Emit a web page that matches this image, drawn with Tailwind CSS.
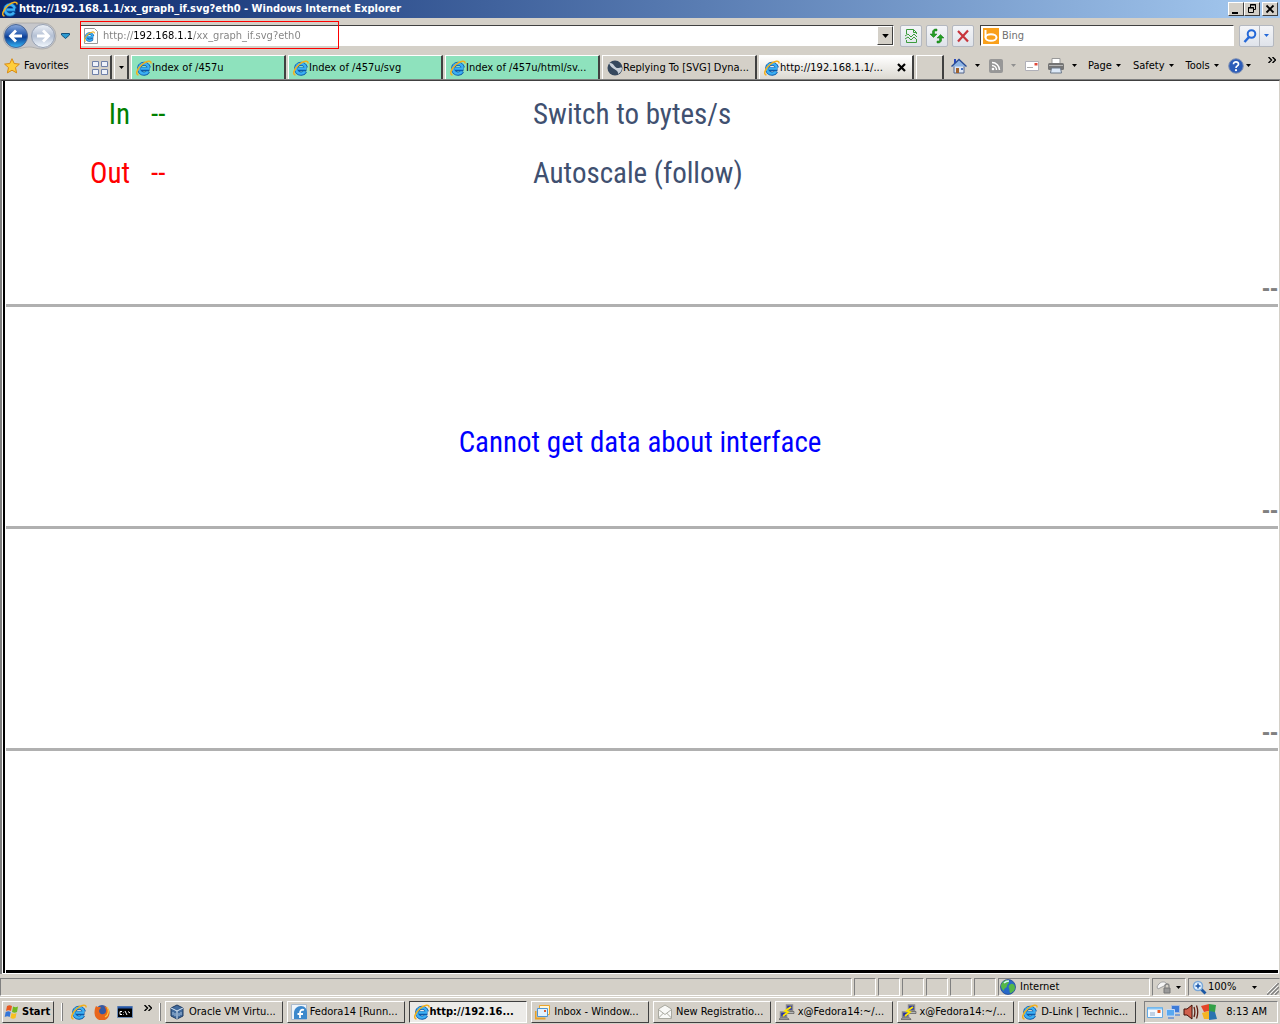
<!DOCTYPE html>
<html lang="en">
<head>
    <meta charset="UTF-8" />
    <meta name="viewport" content="width=device-width, initial-scale=1.0" />
    <title>http://192.168.1.1/xx_graph_if.svg?eth0 - Windows Internet Explorer</title>
    <script src="https://cdn.jsdelivr.net/npm/@tailwindcss/browser@4"></script>
</head>
<body class="bg-[#d4d0c8] text-black text-[11px] leading-4 font-['DejaVu_Sans_Condensed','DejaVu_Sans',sans-serif]">
    <!-- Shared icons -->
    <svg class="hidden">
        <symbol id="ie" viewBox="0 0 16 16">
            <path d="M13.500 9.300H4.500M13 7.600A5 5 0 1 0 12.300 11.500" fill="none" stroke="#0b58a8" stroke-width="4" />
            <path d="M13 8.600H4.500M12.800 7.600A5 5 0 1 0 12 11.500" fill="none" stroke="#3cb0f4" stroke-width="2.400" />
            <path d="M2.500 15C-1 14.500 1 9 6 4.500C10.500 .8 15.500 0 15 3.500" fill="none" stroke="#f2b01e" stroke-width="1.500" />
        </symbol>
        <symbol id="caret" viewBox="0 0 5 3">
            <path d="M0 0h5L2.500 3z" fill="currentColor" />
        </symbol>
        <symbol id="chevrons" viewBox="0 0 8 6">
            <path d="M.5 0l3 3l-3 3M4.500 0l3 3l-3 3" fill="none" stroke="#000" stroke-width="1.400" />
        </symbol>
        <symbol id="putty" viewBox="0 0 16 16">
            <path d="M7.500 1h6v5.500h-6zM1.500 8h6v5h-6z" fill="#2430a8" stroke="#8a8a8a" stroke-width="1.400" />
            <path d="M7 7.500h8v2H8zM1 14h8l1 1.500H0z" fill="#b8b8b8" stroke="#444" stroke-width=".6" />
            <path d="M12 3L6 7l3 1l-5 4" fill="none" stroke="#ffe600" stroke-width="1.800" />
        </symbol>
    </svg>

    <div class="flex flex-col h-screen overflow-hidden">
        <!-- Title bar -->
        <header class="flex items-center h-[18px] px-[2px] bg-linear-to-r from-[#0a246a] to-[#a6caf0]">
            <svg class="size-4"><use href="#ie" /></svg>
            <h1 class="flex-1 pl-px font-bold text-white whitespace-nowrap">http://192.168.1.1/xx_graph_if.svg?eth0 - Windows Internet Explorer</h1>
            <button aria-label="Minimize" class="w-4 h-[14px] bg-[#d4d0c8] border border-t-white border-l-white border-r-[#404040] border-b-[#404040]">
                <svg class="w-[14px] h-3" viewBox="0 0 14 12"><path d="M3 9h6v2H3z" /></svg>
            </button>
            <button aria-label="Restore" class="w-4 h-[14px] bg-[#d4d0c8] border border-t-white border-l-white border-r-[#404040] border-b-[#404040]">
                <svg class="w-[14px] h-3" viewBox="0 0 14 12"><path d="M5.500 4V1.500h5v5H9M5 2h6M3.500 4.500h5v5h-5zM3 5h6" fill="none" stroke="#000" /></svg>
            </button>
            <button aria-label="Close" class="ml-[2px] w-4 h-[14px] bg-[#d4d0c8] border border-t-white border-l-white border-r-[#404040] border-b-[#404040]">
                <svg class="w-[14px] h-3" viewBox="0 0 14 12"><path d="M3.500 2.500l7 7M10.500 2.500l-7 7" stroke="#000" stroke-width="1.800" /></svg>
            </button>
        </header>

        <!-- Navigation bar -->
        <div class="relative flex items-center h-9 pl-[2px] pr-[6px] pb-px">
            <svg class="w-[55px] h-7" viewBox="0 0 55 28">
                <defs>
                    <linearGradient id="backFill" x2="0" y2="1"><stop stop-color="#8aa9dc" /><stop offset=".4" stop-color="#2f62b4" /><stop offset=".55" stop-color="#0a3c94" /><stop offset="1" stop-color="#36b8f8" /></linearGradient>
                    <linearGradient id="fwdFill" x2="0" y2="1"><stop stop-color="#eef2f8" /><stop offset=".5" stop-color="#b4c0d4" /><stop offset="1" stop-color="#f4faff" /></linearGradient>
                </defs>
                <path d="M14 1h27a13 13 0 0 1 0 26C34 27 33 25 27 25S19 27 14 27A13 13 0 0 1 14 1z" fill="#c6c7cb" stroke="#9c9c9c" stroke-width=".6" />
                <circle cx="14" cy="14" r="11.500" fill="url(#backFill)" stroke="#4a6694" />
                <circle cx="41" cy="14" r="11.500" fill="url(#fwdFill)" stroke="#98a2b4" />
                <path d="M20 14H9M14 8.500L8.500 14l5.500 5.500" fill="none" stroke="#fff" stroke-width="2.800" />
                <path d="M35 14h11M41 8.500l5.500 5.500l-5.500 5.500" fill="none" stroke="#fff" stroke-width="2.800" />
            </svg>
            <button aria-label="Recent pages" class="ml-1 w-[9px]"><svg class="w-[9px] h-[6px]" viewBox="0 0 9 6"><path d="M.5 .5h8v1.500L4.500 5.500L.5 2z" fill="#2c9ad0" stroke="#15507c" /></svg></button>

            <div class="ml-[10px] flex flex-1 items-center h-[21px] bg-white border border-t-[#404040] border-l-[#404040] border-r-white border-b-white">
                <svg class="ml-[2px] w-4 h-4" viewBox="0 0 16 16"><path d="M1.500 .5h10l3 3v12h-13z" fill="#fff" stroke="#999" /><use href="#ie" x="1" y="3" width="11" height="11" /></svg>
                <input type="text" aria-label="Address" value="http://192.168.1.1/xx_graph_if.svg?eth0" class="ml-1 w-0 flex-1 outline-none text-transparent bg-clip-text bg-[linear-gradient(90deg,#808080_31px,#000_31px,#000_90px,#808080_90px)]" />
                <button aria-label="Show addresses" class="flex items-center justify-center w-4 h-[19px] bg-[#d4d0c8] border border-t-white border-l-white border-r-[#404040] border-b-[#404040]"><svg class="w-[7px] h-1"><use href="#caret" /></svg></button>
            </div>
            <button aria-label="Compatibility view" class="ml-[6px] flex items-center justify-center size-[22px] rounded-xs border border-[#b4b8c0] bg-linear-to-b from-[#f4f5f8] to-[#dfe3ea]">
                <svg class="size-4" viewBox="0 0 16 16" fill="none" stroke="#3c9c3c"><path d="M3.500 6V1.500h7l3 3V6M10.500 1.500v3h3M3.500 12v2.500h10V12" /><path d="M2 8l3-2l3 3l3-3l3 3M2 11l3-2l3 3l3-3l3 3" /></svg>
            </button>
            <button aria-label="Refresh" class="ml-1 flex items-center justify-center size-[22px] rounded-xs border border-[#b4b8c0] bg-linear-to-b from-[#f4f5f8] to-[#dfe3ea]">
                <svg class="size-4" viewBox="0 0 16 16" fill="#24a024" stroke="#137413" stroke-width=".5"><path d="M8 1v2H5.500v3H8L4.500 9.500L1 6h2.500V3L5.500 1z" /><path d="M8 15v-2h2.500v-3H8l3.500-3.500L15 10h-2.500v3l-2 2z" /></svg>
            </button>
            <button aria-label="Stop" class="ml-1 flex items-center justify-center size-[22px] rounded-xs border border-[#b4b8c0] bg-linear-to-b from-[#f4f5f8] to-[#dfe3ea]">
                <svg class="size-4" viewBox="0 0 16 16"><path d="M3 3l10 10.500M13 2.500l-10 11" stroke="#c8343c" stroke-width="2.200" /></svg>
            </button>
            <div class="ml-[6px] flex items-center w-[254px] h-[21px] bg-white border border-t-[#404040] border-l-[#404040] border-r-white border-b-white">
                <svg class="ml-[2px] size-4" viewBox="0 0 16 16"><path d="M0 0h16v16H0z" fill="#f9a01b" /><path d="M2.500 2v7.500" stroke="#fff" stroke-width="2" /><ellipse cx="8" cy="9.500" rx="5.500" ry="3.300" fill="none" stroke="#fff" stroke-width="2" /></svg>
                <input type="text" aria-label="Search" placeholder="Bing" class="ml-[3px] w-0 flex-1 outline-none placeholder:text-[#707070]" />
            </div>
            <div class="ml-[5px] flex h-[22px] rounded-xs border border-[#b4b8c0] bg-linear-to-b from-[#f4f5f8] to-[#dfe3ea]">
                <button aria-label="Search the web" class="flex items-center justify-center w-5 border-r border-[#b4b8c0]"><svg class="size-[14px]" viewBox="0 0 14 14" fill="none" stroke="#2468d8"><circle cx="8.500" cy="5" r="3.800" stroke-width="2" /><path d="M6 8l-4.500 5" stroke-width="2.500" /></svg></button>
                <button aria-label="Search options" class="flex items-center justify-center w-[13px] text-[#2468d8]"><svg class="w-[5px] h-[3px]"><use href="#caret" /></svg></button>
            </div>
            <!-- Highlight round the address -->
            <div class="absolute left-[80px] top-[3px] w-[259px] h-7 border border-[#ff0000] pointer-events-none"></div>
        </div>

        <!-- Tabs and command bar -->
        <div class="flex h-[26px] pr-1 border-b border-[#808080]">
            <button class="flex items-center gap-1 w-[88px] pl-1 pb-[2px]">
                <svg class="size-4" viewBox="0 0 16 16"><path d="M8 .7l2.200 4.800l5.200.6l-3.900 3.500l1.100 5.300L8 12.200l-4.600 2.700l1.100-5.300L.6 6.100l5.200-.6z" fill="#ffce3a" stroke="#d98a12" /></svg>
                Favorites
            </button>
            <nav class="flex pt-px gap-[2px]">
                <button aria-label="Quick tabs" class="flex items-center justify-center w-6 border-t border-l border-t-white border-l-white border-r-2 border-r-[#404040]"><svg class="size-4" viewBox="0 0 16 16" fill="#edf1fa" stroke="#6f80a8"><path d="M.5 1.500h6v5h-6zM9.500 1.500h6v5h-6zM.5 9.500h6v5h-6zM9.500 9.500h6v5h-6z" /></svg></button>
                <button aria-label="Tab list" class="flex items-center justify-center w-[15px] border-t border-l border-t-white border-l-white border-r-2 border-r-[#404040]"><svg class="w-[5px] h-[3px]"><use href="#caret" /></svg></button>
                <a href="#" class="flex items-center w-[155px] pl-1 border-t border-l border-t-white border-l-white border-r-2 border-r-[#404040] bg-[#8ee2bd] whitespace-nowrap"><svg class="size-4 shrink-0"><use href="#ie" /></svg>Index of /457u</a>
                <a href="#" class="flex items-center w-[155px] pl-1 border-t border-l border-t-white border-l-white border-r-2 border-r-[#404040] bg-[#8ee2bd] whitespace-nowrap"><svg class="size-4 shrink-0"><use href="#ie" /></svg>Index of /457u/svg</a>
                <a href="#" class="flex items-center w-[155px] pl-1 border-t border-l border-t-white border-l-white border-r-2 border-r-[#404040] bg-[#8ee2bd] whitespace-nowrap"><svg class="size-4 shrink-0"><use href="#ie" /></svg>Index of /457u/html/sv...</a>
                <a href="#" class="flex items-center w-[155px] pl-1 border-t border-l border-t-white border-l-white border-r-2 border-r-[#404040] whitespace-nowrap"><svg class="size-4 shrink-0" viewBox="0 0 16 16"><circle cx="8" cy="8" r="7.500" fill="#36485e" /><path d="M2 3c5-1 5 5 9 5c2 0 3-1 4 0c0 3-2 5-4 6c1-5-7-4-9-11z" fill="#c8d0da" /></svg>Replying To [SVG] Dyna...</a>
                <a href="#" class="flex items-center w-[155px] pl-1 border-t border-l border-t-white border-l-white border-r-2 border-r-[#404040] bg-linear-to-b from-white to-[#dcd9d2] whitespace-nowrap">
                    <svg class="size-4 shrink-0"><use href="#ie" /></svg>http://192.168.1.1/...
                    <svg class="ml-auto mr-[6px] size-[9px]" viewBox="0 0 9 9"><path d="M1 1l7 7M8 1l-7 7" stroke="#000" stroke-width="2.200" /></svg>
                </a>
                <button aria-label="New tab" class="w-[28px] border-t border-l border-t-white border-l-white border-r-2 border-r-[#404040]"></button>
            </nav>
            <div class="flex flex-1 items-center gap-[9px] pl-[7px] pb-[2px]">
                <button aria-label="Home" class="flex items-center gap-2">
                    <svg class="size-4" viewBox="0 0 16 16"><path d="M3 1h2v4H3z" fill="#2848c0" /><path d="M3 7h10v8H3z" fill="#dce6f6" stroke="#52658c" /><path d="M.5 8.500L8 1.500l7.500 7" fill="#8db4e4" stroke="#284a92" stroke-width="1.300" /><path d="M5 10h3v5H5z" fill="#a0622c" /><path d="M10 10h2v2h-2z" fill="#426fc0" /></svg>
                    <svg class="w-[5px] h-[3px]"><use href="#caret" /></svg>
                </button>
                <button aria-label="Feeds" class="flex items-center gap-2 text-[#909090]">
                    <svg class="size-[14px]" viewBox="0 0 14 14"><rect width="14" height="14" rx="2" fill="#979797" /><circle cx="4" cy="10" r="1.300" fill="#fff" /><path d="M3 6.500a4.500 4.500 0 0 1 4.500 4.500M3 3.500a7.500 7.500 0 0 1 7.500 7.500" fill="none" stroke="#fff" stroke-width="1.500" /></svg>
                    <svg class="w-[5px] h-[3px]"><use href="#caret" /></svg>
                </button>
                <button aria-label="Read mail"><svg class="w-[14px] h-[10px]" viewBox="0 0 14 10"><path d="M.5 .5h13v9H.5z" fill="#fff" stroke="#b0b0b8" /><path d="M9.500 2h3v2.500h-3z" fill="#e04838" /><path d="M2 6.500h6" stroke="#aaa" /></svg></button>
                <button aria-label="Print" class="flex items-center gap-2">
                    <svg class="size-4" viewBox="0 0 16 16"><path d="M4 .5h8V6H4z" fill="#fff" stroke="#999" /><rect y="5" width="16" height="7" rx="1.500" fill="#757575" /><path d="M1 7.500h14" stroke="#b8b8b8" /><path d="M3.500 10h9l1 5h-11z" fill="#dce9f8" stroke="#6c7888" /></svg>
                    <svg class="w-[5px] h-[3px]"><use href="#caret" /></svg>
                </button>
                <div class="flex items-center gap-3 pl-[2px]">
                    <button class="flex items-center gap-1">Page <svg class="w-[5px] h-[3px]"><use href="#caret" /></svg></button>
                    <button class="flex items-center gap-1">Safety <svg class="w-[5px] h-[3px]"><use href="#caret" /></svg></button>
                    <button class="flex items-center gap-1">Tools <svg class="w-[5px] h-[3px]"><use href="#caret" /></svg></button>
                </div>
                <button aria-label="Help" class="flex items-center gap-[2px]">
                    <svg class="size-4" viewBox="0 0 16 16"><circle cx="8" cy="8" r="7.300" fill="#2c5cb8" stroke="#8494b4" /><path d="M5.500 6.200c0-3.200 5.200-3 5 0C10.400 8 8 7.800 8 10" fill="none" stroke="#fff" stroke-width="1.700" /><circle cx="8" cy="12.200" r="1.100" fill="#fff" /></svg>
                    <svg class="w-[5px] h-[3px]"><use href="#caret" /></svg>
                </button>
                <button aria-label="More commands" class="ml-auto pb-3"><svg class="w-2 h-[6px]"><use href="#chevrons" /></svg></button>
            </div>
        </div>

        <!-- Page content -->
        <main class="flex-1 min-h-0 flex pr-px pb-px border-t border-l-2 border-r border-t-[#404040] border-l-[#808080] border-r-[#d4d0c8] bg-white font-['Roboto_Condensed','Liberation_Sans',sans-serif] text-[29px] leading-[59px]">
            <div class="ml-px mr-px w-[2px] bg-black"></div>
            <div class="flex-1 flex flex-col pt-[2px]">
                <section class="flex-1 flex flex-col pt-[2px] border-b-[3px] border-[#b0b0b0]">
                    <div class="grid grid-cols-[124fr_403fr_745fr]">
                        <span class="text-right text-[#008000]">In</span>
                        <span class="pl-[21px] text-[#008000]">--</span>
                        <button class="text-left text-[#405070]">Switch to bytes/s</button>
                        <span class="text-right text-[#ff0000]">Out</span>
                        <span class="pl-[21px] text-[#ff0000]">--</span>
                        <button class="text-left text-[#405070]">Autoscale (follow)</button>
                    </div>
                    <span class="mt-auto mb-1 text-right text-2xl leading-6 font-bold text-[#808080] font-['Liberation_Sans',sans-serif]">--</span>
                </section>
                <section class="flex-1 flex flex-col border-b-[3px] border-[#b0b0b0]">
                    <p class="mt-[106px] mr-1 text-center text-[#0000ff]">Cannot get data about interface</p>
                    <span class="mt-auto mb-1 text-right text-2xl leading-6 font-bold text-[#808080] font-['Liberation_Sans',sans-serif]">--</span>
                </section>
                <section class="flex-1 flex flex-col border-b-[3px] border-[#b0b0b0]">
                    <span class="mt-auto mb-1 text-right text-2xl leading-6 font-bold text-[#808080] font-['Liberation_Sans',sans-serif]">--</span>
                </section>
                <section class="flex-1 border-b-[3px] border-black"></section>
            </div>
        </main>

        <!-- Status bar -->
        <footer class="flex gap-[2px] h-[23px] pt-1 pb-px">
            <div class="flex-1 border border-t-[#808080] border-l-[#808080] border-r-white border-b-white"></div>
            <div class="w-[22px] border border-t-[#808080] border-l-[#808080] border-r-white border-b-white"></div>
            <div class="w-[22px] border border-t-[#808080] border-l-[#808080] border-r-white border-b-white"></div>
            <div class="w-[22px] border border-t-[#808080] border-l-[#808080] border-r-white border-b-white"></div>
            <div class="w-[22px] border border-t-[#808080] border-l-[#808080] border-r-white border-b-white"></div>
            <div class="w-[22px] border border-t-[#808080] border-l-[#808080] border-r-white border-b-white"></div>
            <div class="w-[22px] border border-t-[#808080] border-l-[#808080] border-r-white border-b-white"></div>
            <div class="flex items-center gap-1 w-[152px] pl-px border border-t-[#808080] border-l-[#808080] border-r-white border-b-white">
                <svg class="size-4" viewBox="0 0 16 16"><circle cx="8" cy="8" r="7.500" fill="#2868c8" stroke="#1c4488" stroke-width=".7" /><path d="M3 3c3-3 6-2 6 0S7 5 7 7s-3 2-3 4S1 9 1 7s1-3 2-4zM11 5c3-1 4 2 4 4s-2 4-4 5s-1-3-2-5s0-3 2-4z" fill="#54b848" /><path d="M4 4c2-2 4-2 5-2" fill="none" stroke="#d4f4ff" stroke-width="1.500" /></svg>
                Internet
            </div>
            <button aria-label="Privacy" class="flex items-center gap-[5px] w-[34px] pl-[3px] border border-t-[#808080] border-l-[#808080] border-r-white border-b-white">
                <svg class="w-[15px] h-4 shrink-0" viewBox="0 0 15 16"><path d="M1 8C3 3 8 1 11 5L8 7L2 10z" fill="#f6f6f6" stroke="#a0a0a0" /><path d="M8 9h6v5H8z" fill="#999" stroke="#777" /><path d="M9 9V7a2 2 0 0 1 4 0v2" fill="none" stroke="#888" stroke-width="1.300" /></svg>
                <svg class="w-[5px] h-[3px] shrink-0"><use href="#caret" /></svg>
            </button>
            <div class="relative w-[92px] border border-t-[#808080] border-l-[#808080] border-r-transparent border-b-white">
                <button class="flex items-center gap-px w-full pl-[3px] pr-[22px]"><svg class="size-[15px]" viewBox="0 0 15 15"><path d="M9 9l4.500 4.500" stroke="#1c58a4" stroke-width="2.800" /><circle cx="6" cy="6" r="4.500" fill="#e2f2ff" stroke="#79a7d8" stroke-width="1.500" /><path d="M3.500 6h5M6 3.500v5" stroke="#1854a8" stroke-width="1.500" /></svg>100%<svg class="ml-auto w-[5px] h-[3px]"><use href="#caret" /></svg></button>
                <svg class="absolute right-0 bottom-0 size-3" viewBox="0 0 12 12"><path d="M0 12L12 0M4 12l8-8M8 12l4-4" stroke="#808080" stroke-width="1.500" /><path d="M-1 11L11-1M3 11l8-8M7 11l4-4" stroke="#fff" stroke-width=".8" /></svg>
            </div>
        </footer>

        <!-- Taskbar -->
        <div class="flex items-center h-[27px] pl-[2px] pr-[2px] pt-px border-t border-white">
            <button class="flex items-center gap-[2px] w-[52px] h-[22px] pl-px font-bold border border-t-white border-l-white border-r-[#404040] border-b-[#404040]">
                <svg class="size-4 shrink-0" viewBox="0 0 16 16"><path d="M3 2c2-1 3-1 5 0L7 7C5 6 4 6 2 7z" fill="#e85820" /><path d="M9 2.500c2 1 3 1 5 0L13 8c-2 1-3 1-5 0z" fill="#70b820" /><path d="M1.700 8c2-1 3-1 5 0l-1 5c-2-1-3-1-5 0z" fill="#3476d8" /><path d="M7.500 9c2 1 3 1 5 0l-1 5c-2 1-3 1-5 0z" fill="#f8c020" /></svg>
                Start
            </button>
            <div class="ml-[7px] w-[2px] h-[18px] bg-white border-r border-[#808080]"></div>
            <div class="flex items-center gap-[7px] ml-2">
                <button aria-label="Internet Explorer"><svg class="size-4"><use href="#ie" /></svg></button>
                <button aria-label="Firefox"><svg class="size-4" viewBox="0 0 16 16"><circle cx="8" cy="7" r="6" fill="#3458a4" /><path d="M2 2c1 1 2 1 3 1c1 0 2 0 2 1c-3 2-2 5 0 6c3 1 5-1 5-3c0-2-1-4-2-5c4 1 6 4 5.500 7.500A7.500 7.500 0 0 1 .5 8.500C.5 6 1 4 2 2z" fill="#e8661c" /><path d="M13 3c2 3 2 8-2 10" fill="none" stroke="#ffc83c" stroke-width="1.300" /></svg></button>
                <button aria-label="Command prompt"><svg class="size-4" viewBox="0 0 16 16"><path d="M.5 2.500h15v11H.5z" fill="#000" stroke="#6c8cb8" /><path d="M1 3.500h14" stroke="#2858a8" stroke-width="2" /><path d="M5 7.500H3v3h2M6.500 8v.5M6.500 10v.5M8 7l2 4M11 7.500l2 1.500" fill="none" stroke="#fff" /></svg></button>
                <button aria-label="More shortcuts" class="ml-1 pb-2"><svg class="w-2 h-[6px]"><use href="#chevrons" /></svg></button>
            </div>
            <div class="ml-[7px] w-[2px] h-[18px] bg-white border-r border-[#808080]"></div>
            <div class="flex flex-1 gap-1 ml-1 mr-2">
                <button class="flex flex-1 items-center gap-1 h-[22px] pl-[3px] border border-t-white border-l-white border-r-[#404040] border-b-[#404040] whitespace-nowrap"><svg class="size-4 shrink-0" viewBox="0 0 16 16"><path d="M8 1l6 3v8l-6 3l-6-3V4z" fill="#416a9c" stroke="#1f3a60" /><path d="M2 4l6 3l6-3M8 7v8" fill="none" stroke="#dbe8f4" /><path d="M4 8v3M6 9v3M10 9v3M12 8v3" stroke="#a9c3df" /></svg>Oracle VM Virtu...</button>
                <button class="flex flex-1 items-center gap-[3px] h-[22px] pl-[3px] border border-t-white border-l-white border-r-[#404040] border-b-[#404040] whitespace-nowrap"><svg class="size-4 shrink-0" viewBox="0 0 16 16"><path d="M.5 .5h15v15H.5z" fill="#eef4fa" stroke="#aabacc" /><path d="M3 15V9c0-4 3-7 7-7s6 3 6 7v6z" fill="#3c88cc" /><path d="M13 6c-3-1-4 1-4 3v5M6.500 10H12" fill="none" stroke="#fff" stroke-width="1.800" /></svg>Fedora14 [Runn...</button>
                <button class="flex flex-1 items-center h-[22px] pl-1 font-bold border border-t-[#404040] border-l-[#404040] border-r-white border-b-white bg-[#ecebe8] whitespace-nowrap"><svg class="size-4 shrink-0"><use href="#ie" /></svg>http://192.16...</button>
                <button class="flex flex-1 items-center gap-[3px] h-[22px] pl-[3px] border border-t-white border-l-white border-r-[#404040] border-b-[#404040] whitespace-nowrap"><svg class="size-4 shrink-0" viewBox="0 0 16 16"><path d="M4.500 1.500h10v9h-10z" fill="#fff7d8" stroke="#e9a52c" /><path d="M2.500 4.500h10v8h-10z" fill="#e2f2ff" stroke="#4d94d4" /><path d="M.5 7v7.500h10" fill="none" stroke="#e5a12a" stroke-width="2" /><path d="M9 6h2v2H9z" fill="#d85b30" /></svg>Inbox - Window...</button>
                <button class="flex flex-1 items-center gap-[3px] h-[22px] pl-[3px] border border-t-white border-l-white border-r-[#404040] border-b-[#404040] whitespace-nowrap"><svg class="size-4 shrink-0" viewBox="0 0 16 16" fill="#f9f9f7" stroke="#a9a9a0"><path d="M1.500 5L8 1l6.500 4v9.500h-13z" /><path d="M1.500 5.500l6.500 5l6.500-5M1.500 14l5-5M14.500 14l-5-5" fill="none" /></svg>New Registratio...</button>
                <button class="flex flex-1 items-center gap-[3px] h-[22px] pl-[3px] border border-t-white border-l-white border-r-[#404040] border-b-[#404040] whitespace-nowrap"><svg class="size-4 shrink-0"><use href="#putty" /></svg>x@Fedora14:~/...</button>
                <button class="flex flex-1 items-center gap-[3px] h-[22px] pl-[3px] border border-t-white border-l-white border-r-[#404040] border-b-[#404040] whitespace-nowrap"><svg class="size-4 shrink-0"><use href="#putty" /></svg>x@Fedora14:~/...</button>
                <button class="flex flex-1 items-center gap-[3px] h-[22px] pl-[3px] border border-t-white border-l-white border-r-[#404040] border-b-[#404040] whitespace-nowrap"><svg class="size-4 shrink-0"><use href="#ie" /></svg>D-Link | Technic...</button>
            </div>
            <!-- Tray -->
            <div class="flex items-center gap-[2px] w-[134px] h-[22px] pl-[2px] border border-t-[#808080] border-l-[#808080] border-r-white border-b-white whitespace-nowrap">
                <svg class="size-4" viewBox="0 0 16 16"><path d="M.5 3.500h15v10H.5z" fill="#f4faff" stroke="#65a9e2" /><path d="M1 4.500h14" stroke="#85c4f4" stroke-width="2" /><path d="M10.500 6h3v3h-3z" fill="#e85c24" /><path d="M3 9h5M3 11h5" stroke="#8aa8c8" /></svg>
                <svg class="size-4" viewBox="0 0 16 16"><path d="M6.500 1.500h8v7h-8z" fill="#3d7bd8" stroke="#a8bce0" /><path d="M1.500 5.500h8v6.500h-8z" fill="#58a8f0" stroke="#c4d8f4" /><path d="M3 14h6M10 11h5" stroke="#7f9fd0" stroke-width="2" /></svg>
                <svg class="size-4" viewBox="0 0 16 16"><path d="M1 5h3l5-4v14l-5-4H1z" fill="#d0604c" stroke="#401008" /><path d="M11 3c1 3 1 7 0 10M13.500 1.500c1.500 4 1.500 9 0 13" fill="none" stroke="#601c10" stroke-width="1.300" /></svg>
                <svg class="size-4" viewBox="0 0 16 16"><path d="M0 2l8-2v7L3 8z" fill="#e44428" /><path d="M8 0l7 1l-1 7H8z" fill="#34a048" /><path d="M1 9l7-2v8H3z" fill="#f4b424" /><path d="M8 7l6 1l2 7l-8 1z" fill="#2c74b0" /></svg>
                <time class="ml-auto mr-[10px]">8:13 AM</time>
            </div>
        </div>
    </div>
</body>
</html>
